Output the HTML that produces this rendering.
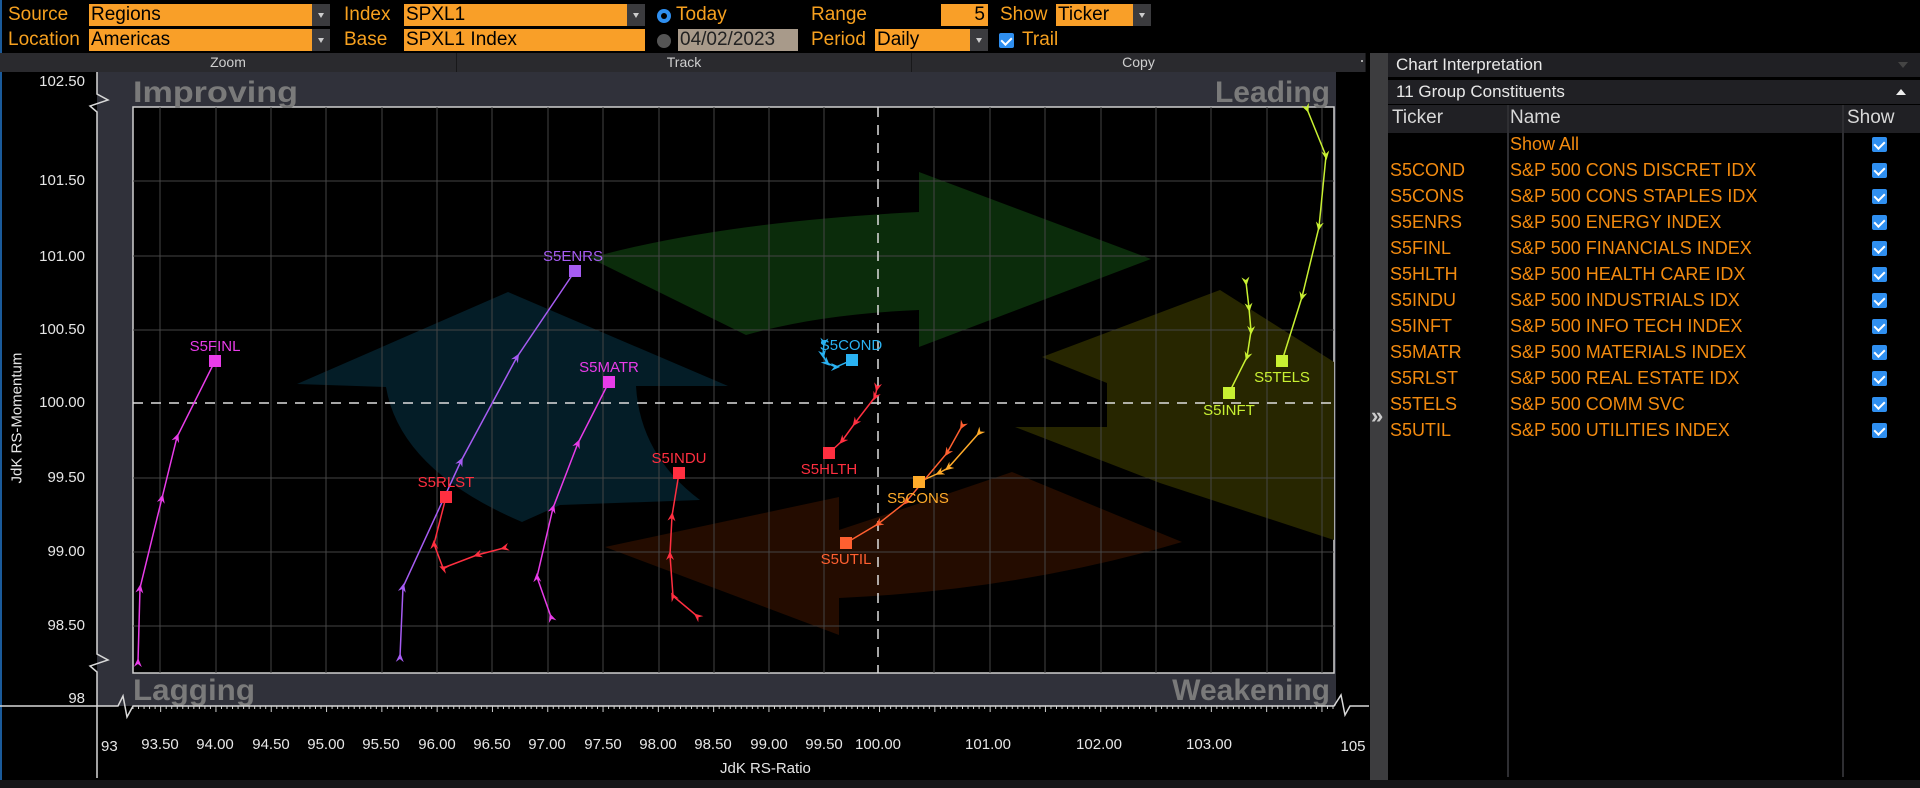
<!DOCTYPE html>
<html><head><meta charset="utf-8">
<style>
*{margin:0;padding:0;box-sizing:border-box}
body{width:1920px;height:788px;background:#000;overflow:hidden;position:relative;font-family:"Liberation Sans Narrow","Liberation Sans",sans-serif;}
.a{position:absolute;white-space:nowrap}
.lbl{color:#f7a11f;font-size:19px;line-height:22px}
.fld{background:#f99f28;color:#000;font-size:19px;line-height:22px;padding-left:2px;height:22px}
.btn{background:#3b3b3e;height:22px;width:18px}
.btn:after{content:"";position:absolute;left:6px;top:9px;border-left:3px solid transparent;border-right:3px solid transparent;border-top:5px solid #ccc}
.tb{background:#2a2a2e;color:#cfcfcf;font-size:14px;line-height:18px;text-align:center;height:19px;top:53px;border-right:1px solid #18181a}
.row{color:#f28a0f;font-size:18px;line-height:22px}
.cb{width:15px;height:15px;background:#2f8ff0;border-radius:2px}
.cb:after{content:"";position:absolute;left:4px;top:2px;width:5px;height:8px;border:solid #fff;border-width:0 2px 2px 0;transform:rotate(45deg)}
.yl{color:#e6e6e6;font-size:15px;text-align:right;width:80px}
.xl{color:#e6e6e6;font-size:15px;transform:translateX(-50%)}
</style></head><body>
<div class="a" style="left:0;top:0;width:2px;height:788px;background:#1a5a9a"></div>
<div class="a lbl" style="left:8px;top:4px">Source</div>
<div class="a fld" style="left:89px;top:4px;width:223px">Regions</div>
<div class="a btn" style="left:312px;top:4px"></div>
<div class="a lbl" style="left:8px;top:29px">Location</div>
<div class="a fld" style="left:89px;top:29px;width:223px">Americas</div>
<div class="a btn" style="left:312px;top:29px"></div>
<div class="a lbl" style="left:344px;top:4px">Index</div>
<div class="a fld" style="left:404px;top:4px;width:223px">SPXL1</div>
<div class="a btn" style="left:627px;top:4px"></div>
<div class="a lbl" style="left:344px;top:29px">Base</div>
<div class="a fld" style="left:404px;top:29px;width:241px">SPXL1 Index</div>
<div class="a" style="left:657px;top:9px;width:14px;height:14px;border-radius:50%;background:#2f8ff0"></div>
<div class="a" style="left:661px;top:13px;width:6px;height:6px;border-radius:50%;background:#000"></div>
<div class="a lbl" style="left:676px;top:4px">Today</div>
<div class="a" style="left:657px;top:34px;width:14px;height:14px;border-radius:50%;background:#555"></div>
<div class="a fld" style="left:678px;top:29px;width:120px;background:#a89a8a;color:#222">04/02/2023</div>
<div class="a lbl" style="left:811px;top:4px">Range</div>
<div class="a fld" style="left:941px;top:4px;width:47px;text-align:right;padding-right:3px">5</div>
<div class="a lbl" style="left:811px;top:29px">Period</div>
<div class="a fld" style="left:875px;top:29px;width:95px">Daily</div>
<div class="a btn" style="left:970px;top:29px"></div>
<div class="a lbl" style="left:1000px;top:4px">Show</div>
<div class="a fld" style="left:1056px;top:4px;width:77px">Ticker</div>
<div class="a btn" style="left:1133px;top:4px"></div>
<div class="a cb" style="left:999px;top:33px"></div>
<div class="a lbl" style="left:1022px;top:29px">Trail</div>
<div class="a tb" style="left:0;width:457px">Zoom</div>
<div class="a tb" style="left:457px;width:455px">Track</div>
<div class="a tb" style="left:912px;width:454px">Copy</div>
<div class="a" style="left:1361px;top:60px;width:2px;height:2px;background:#aaa"></div>
<div class="a" style="left:1370px;top:53px;width:18px;height:727px;background:#3d3d3f"></div>
<div class="a" style="left:1371px;top:403px;color:#ccc;font-size:22px;font-weight:bold">»</div>
<div class="a" style="left:1388px;top:53px;width:532px;height:24px;background:#202024;color:#e8e8e8;font-size:17px;line-height:24px;padding-left:8px">Chart Interpretation</div>
<div class="a" style="left:1898px;top:62px;border-left:5px solid transparent;border-right:5px solid transparent;border-top:6px solid #444"></div>
<div class="a" style="left:1388px;top:80px;width:532px;height:24px;background:#202024;color:#e8e8e8;font-size:17px;line-height:24px;padding-left:8px">11 Group Constituents</div>
<div class="a" style="left:1896px;top:89px;border-left:5px solid transparent;border-right:5px solid transparent;border-bottom:6px solid #eee"></div>
<div class="a" style="left:1388px;top:105px;width:532px;height:28px;background:#202024"></div>
<div class="a" style="left:1392px;top:107px;color:#d8d8d8;font-size:19px">Ticker</div>
<div class="a" style="left:1510px;top:107px;color:#d8d8d8;font-size:19px">Name</div>
<div class="a" style="left:1847px;top:107px;color:#d8d8d8;font-size:19px">Show</div>
<div class="a" style="left:1507px;top:105px;width:2px;height:672px;background:#2e2e32"></div>
<div class="a" style="left:1842px;top:105px;width:2px;height:672px;background:#2e2e32"></div>
<div class="a" style="left:0;top:780px;width:1920px;height:8px;background:#151517"></div>

<div class="a row" style="left:1510px;top:133px">Show All</div><div class="a cb" style="left:1872px;top:137px"></div>
<div class="a row" style="left:1390px;top:159px">S5COND</div><div class="a row" style="left:1510px;top:159px">S&amp;P 500 CONS DISCRET IDX</div><div class="a cb" style="left:1872px;top:163px"></div>
<div class="a row" style="left:1390px;top:185px">S5CONS</div><div class="a row" style="left:1510px;top:185px">S&amp;P 500 CONS STAPLES IDX</div><div class="a cb" style="left:1872px;top:189px"></div>
<div class="a row" style="left:1390px;top:211px">S5ENRS</div><div class="a row" style="left:1510px;top:211px">S&amp;P 500 ENERGY INDEX</div><div class="a cb" style="left:1872px;top:215px"></div>
<div class="a row" style="left:1390px;top:237px">S5FINL</div><div class="a row" style="left:1510px;top:237px">S&amp;P 500 FINANCIALS INDEX</div><div class="a cb" style="left:1872px;top:241px"></div>
<div class="a row" style="left:1390px;top:263px">S5HLTH</div><div class="a row" style="left:1510px;top:263px">S&amp;P 500 HEALTH CARE IDX</div><div class="a cb" style="left:1872px;top:267px"></div>
<div class="a row" style="left:1390px;top:289px">S5INDU</div><div class="a row" style="left:1510px;top:289px">S&amp;P 500 INDUSTRIALS IDX</div><div class="a cb" style="left:1872px;top:293px"></div>
<div class="a row" style="left:1390px;top:315px">S5INFT</div><div class="a row" style="left:1510px;top:315px">S&amp;P 500 INFO TECH INDEX</div><div class="a cb" style="left:1872px;top:319px"></div>
<div class="a row" style="left:1390px;top:341px">S5MATR</div><div class="a row" style="left:1510px;top:341px">S&amp;P 500 MATERIALS INDEX</div><div class="a cb" style="left:1872px;top:345px"></div>
<div class="a row" style="left:1390px;top:367px">S5RLST</div><div class="a row" style="left:1510px;top:367px">S&amp;P 500 REAL ESTATE IDX</div><div class="a cb" style="left:1872px;top:371px"></div>
<div class="a row" style="left:1390px;top:393px">S5TELS</div><div class="a row" style="left:1510px;top:393px">S&amp;P 500 COMM SVC</div><div class="a cb" style="left:1872px;top:397px"></div>
<div class="a row" style="left:1390px;top:419px">S5UTIL</div><div class="a row" style="left:1510px;top:419px">S&amp;P 500 UTILITIES INDEX</div><div class="a cb" style="left:1872px;top:423px"></div>

<div class="a yl" style="left:5px;top:73px">102.50</div>
<div class="a yl" style="left:5px;top:172px">101.50</div>
<div class="a yl" style="left:5px;top:248px">101.00</div>
<div class="a yl" style="left:5px;top:321px">100.50</div>
<div class="a yl" style="left:5px;top:394px">100.00</div>
<div class="a yl" style="left:5px;top:469px">99.50</div>
<div class="a yl" style="left:5px;top:543px">99.00</div>
<div class="a yl" style="left:5px;top:617px">98.50</div>
<div class="a yl" style="left:5px;top:690px">98</div>
<div class="a" style="left:-48px;top:410px;color:#e6e6e6;font-size:15px;transform:rotate(-90deg);width:130px;text-align:center">JdK RS-Momentum</div>
<div class="a" style="left:101px;top:738px;color:#e6e6e6;font-size:15px">93</div>
<div class="a xl" style="left:160px;top:736px">93.50</div>
<div class="a xl" style="left:215px;top:736px">94.00</div>
<div class="a xl" style="left:271px;top:736px">94.50</div>
<div class="a xl" style="left:326px;top:736px">95.00</div>
<div class="a xl" style="left:381px;top:736px">95.50</div>
<div class="a xl" style="left:437px;top:736px">96.00</div>
<div class="a xl" style="left:492px;top:736px">96.50</div>
<div class="a xl" style="left:547px;top:736px">97.00</div>
<div class="a xl" style="left:603px;top:736px">97.50</div>
<div class="a xl" style="left:658px;top:736px">98.00</div>
<div class="a xl" style="left:713px;top:736px">98.50</div>
<div class="a xl" style="left:769px;top:736px">99.00</div>
<div class="a xl" style="left:824px;top:736px">99.50</div>
<div class="a xl" style="left:878px;top:736px">100.00</div>
<div class="a xl" style="left:988px;top:736px">101.00</div>
<div class="a xl" style="left:1099px;top:736px">102.00</div>
<div class="a xl" style="left:1209px;top:736px">103.00</div>
<div class="a xl" style="left:1353px;top:738px">105</div>
<div class="a" style="left:720px;top:760px;color:#e6e6e6;font-size:15px">JdK RS-Ratio</div>

<svg class="a" style="left:0;top:0" width="1370" height="788" viewBox="0 0 1370 788">
<defs>
<marker id="mM" markerWidth="10" markerHeight="10" refX="5" refY="5" orient="auto" markerUnits="userSpaceOnUse"><path d="M0,1 L9,5 L0,9 L3,5Z" fill="#e83ce8"/></marker>
<marker id="mP" markerWidth="10" markerHeight="10" refX="5" refY="5" orient="auto" markerUnits="userSpaceOnUse"><path d="M0,1 L9,5 L0,9 L3,5Z" fill="#a65cf2"/></marker>
<marker id="mR" markerWidth="10" markerHeight="10" refX="5" refY="5" orient="auto" markerUnits="userSpaceOnUse"><path d="M0,1 L9,5 L0,9 L3,5Z" fill="#ff2f40"/></marker>
<marker id="mB" markerWidth="10" markerHeight="10" refX="5" refY="5" orient="auto" markerUnits="userSpaceOnUse"><path d="M0,1 L9,5 L0,9 L3,5Z" fill="#2ab2f2"/></marker>
<marker id="mO" markerWidth="10" markerHeight="10" refX="5" refY="5" orient="auto" markerUnits="userSpaceOnUse"><path d="M0,1 L9,5 L0,9 L3,5Z" fill="#ffab2a"/></marker>
<marker id="mU" markerWidth="10" markerHeight="10" refX="5" refY="5" orient="auto" markerUnits="userSpaceOnUse"><path d="M0,1 L9,5 L0,9 L3,5Z" fill="#ff6030"/></marker>
<marker id="mL" markerWidth="10" markerHeight="10" refX="5" refY="5" orient="auto" markerUnits="userSpaceOnUse"><path d="M0,1 L9,5 L0,9 L3,5Z" fill="#c8f032"/></marker>
</defs>
<rect x="97" y="72" width="1239" height="634" fill="#30313a"/>
<rect x="133" y="107" width="1201" height="566" fill="#000" stroke="#cfcfcf" stroke-width="1.5"/>
<path d="M590,258 Q720,222 919,212 L919,172 L1151,259 L919,347 L919,310 Q820,314 746,335 Z" fill="#0b2c0b"/>
<path d="M508,292 L728,386 L636,386 Q640,455 700,500 L560,505 L522,522 Q400,470 386,387 L297,384 Z" fill="#041d27"/>
<path d="M1042,357 L1220,290 L1334,362 L1334,540 L1160,483 L1015,427 L1107,427 L1107,383 Z" fill="#272600"/>
<path d="M605,547 L839,497 L839,530 Q930,500 1012,472 L1182,542 Q1020,590 839,598 L839,635 Z" fill="#240c00"/>
<g stroke="#454545" stroke-width="1">
<line x1="160" y1="107" x2="160" y2="673"/><line x1="216" y1="107" x2="216" y2="673"/><line x1="271" y1="107" x2="271" y2="673"/><line x1="326" y1="107" x2="326" y2="673"/><line x1="382" y1="107" x2="382" y2="673"/><line x1="437" y1="107" x2="437" y2="673"/><line x1="492" y1="107" x2="492" y2="673"/><line x1="548" y1="107" x2="548" y2="673"/><line x1="603" y1="107" x2="603" y2="673"/><line x1="659" y1="107" x2="659" y2="673"/><line x1="714" y1="107" x2="714" y2="673"/><line x1="769" y1="107" x2="769" y2="673"/><line x1="824" y1="107" x2="824" y2="673"/><line x1="934" y1="107" x2="934" y2="673"/><line x1="990" y1="107" x2="990" y2="673"/><line x1="1045" y1="107" x2="1045" y2="673"/><line x1="1101" y1="107" x2="1101" y2="673"/><line x1="1156" y1="107" x2="1156" y2="673"/><line x1="1211" y1="107" x2="1211" y2="673"/><line x1="1267" y1="107" x2="1267" y2="673"/><line x1="1322" y1="107" x2="1322" y2="673"/>
<line x1="133" y1="181" x2="1334" y2="181"/><line x1="133" y1="256" x2="1334" y2="256"/><line x1="133" y1="330" x2="1334" y2="330"/><line x1="133" y1="478" x2="1334" y2="478"/><line x1="133" y1="552" x2="1334" y2="552"/><line x1="133" y1="626" x2="1334" y2="626"/>
</g>
<line x1="133" y1="403" x2="1334" y2="403" stroke="#ddd" stroke-width="1.5" stroke-dasharray="10,8"/>
<line x1="878" y1="107" x2="878" y2="673" stroke="#ddd" stroke-width="1.5" stroke-dasharray="10,8"/>
<g font-family="Liberation Sans,sans-serif" font-weight="bold" font-size="30" fill="#7a7a7a">
<text x="133" y="102" textLength="165" lengthAdjust="spacingAndGlyphs">Improving</text>
<text x="1330" y="102" text-anchor="end">Leading</text>
<text x="133" y="700" textLength="122" lengthAdjust="spacingAndGlyphs">Lagging</text>
<text x="1330" y="700" text-anchor="end">Weakening</text>
</g>
<g stroke="#d8d8d8" stroke-width="1.5" fill="none">
<path d="M97,72 L97,94 L108,100 L90,106 L97,112 L97,654 L108,660 L90,666 L97,672 L97,778"/>
<path d="M0,706 L118,706 L123,696 L127,717 L133,706 L1334,706 L1341,695 L1345,715 L1350,706 L1369,706"/>
</g>
<g id="tk" stroke="#cfcfcf" stroke-width="1"></g>
<g fill="none" stroke-width="1.5">
<polyline points="138,662 140,588 162,498 177,437 215,361" stroke="#e83ce8" marker-start="url(#mM)" marker-mid="url(#mM)"/>
<polyline points="400,657 403,587 461,461 517,357 575,271" stroke="#a65cf2" marker-start="url(#mP)" marker-mid="url(#mP)"/>
<polyline points="551,617 537,577 553,508 578,443 609,382" stroke="#e83ce8" marker-start="url(#mM)" marker-mid="url(#mM)"/>
<polyline points="504,548 477,555 443,568 434,544 446,497" stroke="#ff2f40" marker-start="url(#mR)" marker-mid="url(#mR)"/>
<polyline points="697,616 673,596 670,555 672,516 679,473" stroke="#ff2f40" marker-start="url(#mR)" marker-mid="url(#mR)"/>
<polyline points="824,343 823,355 827,363 836,367 852,360" stroke="#2ab2f2" marker-start="url(#mB)" marker-mid="url(#mB)"/>
<polyline points="877,388 875,397 855,423 842,441 829,453" stroke="#ff2f40" marker-start="url(#mR)" marker-mid="url(#mR)"/>
<polyline points="979,433 948,468 939,473 919,482" stroke="#ffab2a" marker-start="url(#mO)" marker-mid="url(#mO)"/>
<polyline points="962,426 947,453 906,502 878,524 846,543" stroke="#ff6030" marker-start="url(#mU)" marker-mid="url(#mU)"/>
<polyline points="1246,282 1249,308 1251,331 1247,357 1229,393" stroke="#c8f032" marker-start="url(#mL)" marker-mid="url(#mL)"/>
<polyline points="1307,109 1326,156 1319,227 1302,297 1282,361" stroke="#c8f032" marker-start="url(#mL)" marker-mid="url(#mL)"/>
</g>
<rect x="209" y="355" width="12" height="12" fill="#e83ce8"/>
<rect x="569" y="265" width="12" height="12" fill="#a65cf2"/>
<rect x="603" y="376" width="12" height="12" fill="#e83ce8"/>
<rect x="440" y="491" width="12" height="12" fill="#ff2f40"/>
<rect x="673" y="467" width="12" height="12" fill="#ff2f40"/>
<rect x="846" y="354" width="12" height="12" fill="#2ab2f2"/>
<rect x="823" y="447" width="12" height="12" fill="#ff2f40"/>
<rect x="913" y="476" width="12" height="12" fill="#ffab2a"/>
<rect x="840" y="537" width="12" height="12" fill="#ff6030"/>
<rect x="1223" y="387" width="12" height="12" fill="#c8f032"/>
<rect x="1276" y="355" width="12" height="12" fill="#c8f032"/>
<g font-family="Liberation Sans Narrow,Liberation Sans,sans-serif" font-size="15" text-anchor="middle">
<text x="215" y="351" fill="#e83ce8">S5FINL</text>
<text x="573" y="261" fill="#a65cf2">S5ENRS</text>
<text x="609" y="372" fill="#e83ce8">S5MATR</text>
<text x="446" y="487" fill="#ff2f40">S5RLST</text>
<text x="679" y="463" fill="#ff2f40">S5INDU</text>
<text x="851" y="350" fill="#2ab2f2">S5COND</text>
<text x="829" y="474" fill="#ff2f40">S5HLTH</text>
<text x="918" y="503" fill="#ffab2a">S5CONS</text>
<text x="846" y="564" fill="#ff6030">S5UTIL</text>
<text x="1229" y="415" fill="#c8f032">S5INFT</text>
<text x="1282" y="382" fill="#c8f032">S5TELS</text>
</g>
</svg>
<script>
var g=document.getElementById('tk'),s='';
for(var i=0;i<=217;i++){var x=133+i*5.53;var big=(Math.round((x-160)/55.3*10)%10==0)&&x>=158;s+='<line x1="'+x+'" y1="706" x2="'+x+'" y2="'+(big?712:709)+'"/>';}
g.innerHTML=s;
</script>
</body></html>
